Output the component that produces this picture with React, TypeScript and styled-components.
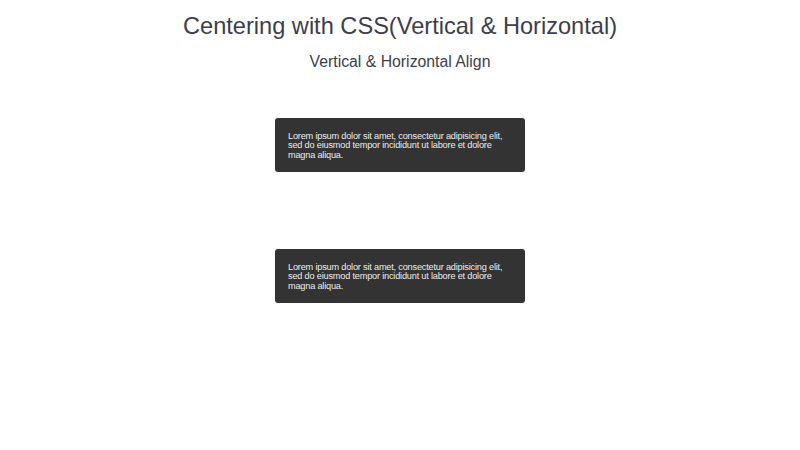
import React from "react";
import styled, { createGlobalStyle } from "styled-components";

const Global = createGlobalStyle`
  html, body { margin: 0; padding: 0; background: #fff; }
  body { font-family: "Liberation Sans", Arial, sans-serif; }
`;

const Page = styled.div`
  display: flex;
  flex-direction: column;
  align-items: center;
  width: 800px;
`;

const Title = styled.h1`
  margin: 12px 0 0;
  font-size: 23.6px;
  line-height: 28px;
  font-weight: 400;
  color: #3e3e4c;
`;

const Subtitle = styled.h2`
  margin: 12px 0 0;
  font-size: 15.8px;
  line-height: 20px;
  font-weight: 400;
  color: #3e3e4c;
`;

const Stages = styled.div`
  margin-top: 7px;
  width: 100%;
  display: flex;
  flex-direction: column;
`;

const Stage = styled.div`
  height: 131px;
  width: 100%;
  display: flex;
  align-items: center;
  justify-content: center;
`;

const Card = styled.div`
  width: 250px;
  height: 54px;
  box-sizing: border-box;
  padding: 14px 12px 0 13px;
  background: #333333;
  border-radius: 3px;
  color: #ececec;
  font-size: 9.2px;
  line-height: 9.7px;
  letter-spacing: -0.2px;
`;

const text =
  "Lorem ipsum dolor sit amet, consectetur adipisicing elit, sed do eiusmod tempor incididunt ut labore et dolore magna aliqua.";

export default function App() {
  return (
    <Page>
      <Global />
      <Title>Centering with CSS(Vertical &amp; Horizontal)</Title>
      <Subtitle>Vertical &amp; Horizontal Align</Subtitle>
      <Stages>
        <Stage>
          <Card>{text}</Card>
        </Stage>
        <Stage>
          <Card>{text}</Card>
        </Stage>
      </Stages>
    </Page>
  );
}
